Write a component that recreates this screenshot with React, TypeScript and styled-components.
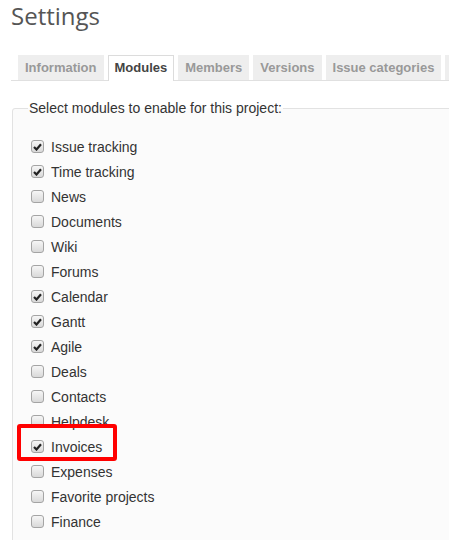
import React from "react";
import styled, { createGlobalStyle } from "styled-components";

const Global = createGlobalStyle`
  html, body { margin: 0; padding: 0; overflow: hidden; background: #fff; }
  body { font-family: "Liberation Sans", Arial, sans-serif; color: #333; }
`;

const Page = styled.div`
  padding: 4px 0 40px 11px;
  width: 600px;
`;

const Title = styled.h2`
  margin: 0;
  font-family: "Open Sans", "Liberation Sans", sans-serif;
  font-weight: 400;
  font-size: 24px;
  line-height: 24px;
  color: #555;
`;

const TabList = styled.ul`
  list-style: none;
  margin: 27px 0 0 0;
  padding: 0 0 0 7px;
  height: 25px;
  display: flex;
  align-items: flex-end;
  gap: 4px;
  border-bottom: 1px solid #e0e0e0;
  white-space: nowrap;
`;

const Tab = styled.li<{ $active?: boolean }>`
  flex: none;
  box-sizing: border-box;
  font-size: 13px;
  font-weight: 700;
  height: ${(p) => (p.$active ? "26px" : "25px")};
  line-height: ${(p) => (p.$active ? "24px" : "25px")};
  margin-bottom: ${(p) => (p.$active ? "-1px" : "0")};
  background: ${(p) => (p.$active ? "#fff" : "#eeeeee")};
  color: ${(p) => (p.$active ? "#444" : "#999")};
  border: ${(p) => (p.$active ? "1px solid #dcdcdc" : "none")};
  border-bottom: none;
  padding: ${(p) => (p.$active ? "0 6px" : "0 7px")};
`;

const Box = styled.fieldset`
  margin: 19px 0 0 1px;
  padding: 18px 0 20px 15px;
  border: 1px solid #e2e2e2;
  border-radius: 3px;
  background: #fbfbfb;
`;

const Legend = styled.legend`
  padding: 0 1px;
  font-size: 14px;
  line-height: 16px;
  color: #333;
`;

const Row = styled.label`
  position: relative;
  display: flex;
  align-items: center;
  height: 25px;
  font-size: 14px;
  color: #333;
`;

const Check = styled.span`
  box-sizing: border-box;
  width: 13px;
  height: 13px;
  margin: 0 7px 0 3px;
  border: 1px solid #a4a4a4;
  border-radius: 3px;
  background: linear-gradient(#f6f6f6, #d9d9d9);
  display: flex;
  align-items: center;
  justify-content: center;
`;

const Highlight = styled.span`
  position: absolute;
  left: -11px;
  top: -10px;
  width: 100px;
  height: 37px;
  box-sizing: border-box;
  border: 4px solid #ff0000;
  border-radius: 3px;
  pointer-events: none;
`;

const modules: [string, boolean][] = [
  ["Issue tracking", true],
  ["Time tracking", true],
  ["News", false],
  ["Documents", false],
  ["Wiki", false],
  ["Forums", false],
  ["Calendar", true],
  ["Gantt", true],
  ["Agile", true],
  ["Deals", false],
  ["Contacts", false],
  ["Helpdesk", false],
  ["Invoices", true],
  ["Expenses", false],
  ["Favorite projects", false],
  ["Finance", false],
];

const tabs = ["Information", "Modules", "Members", "Versions", "Issue categories", "Repositories"];

export default function App() {
  return (
    <>
      <Global />
      <Page>
        <Title>Settings</Title>
        <TabList>
          {tabs.map((t) => (
            <Tab key={t} $active={t === "Modules"}>
              {t}
            </Tab>
          ))}
        </TabList>
        <Box>
          <Legend>Select modules to enable for this project:</Legend>
          {modules.map(([name, on]) => (
            <Row key={name}>
              <Check>
                {on && (
                  <svg width="9" height="8" viewBox="0 0 9 8">
                    <path d="M1 4 L3.5 6.5 L8 1.3" fill="none" stroke="#222" strokeWidth="2.2" />
                  </svg>
                )}
              </Check>
              {name}
              {name === "Invoices" && <Highlight />}
            </Row>
          ))}
        </Box>
      </Page>
    </>
  );
}
